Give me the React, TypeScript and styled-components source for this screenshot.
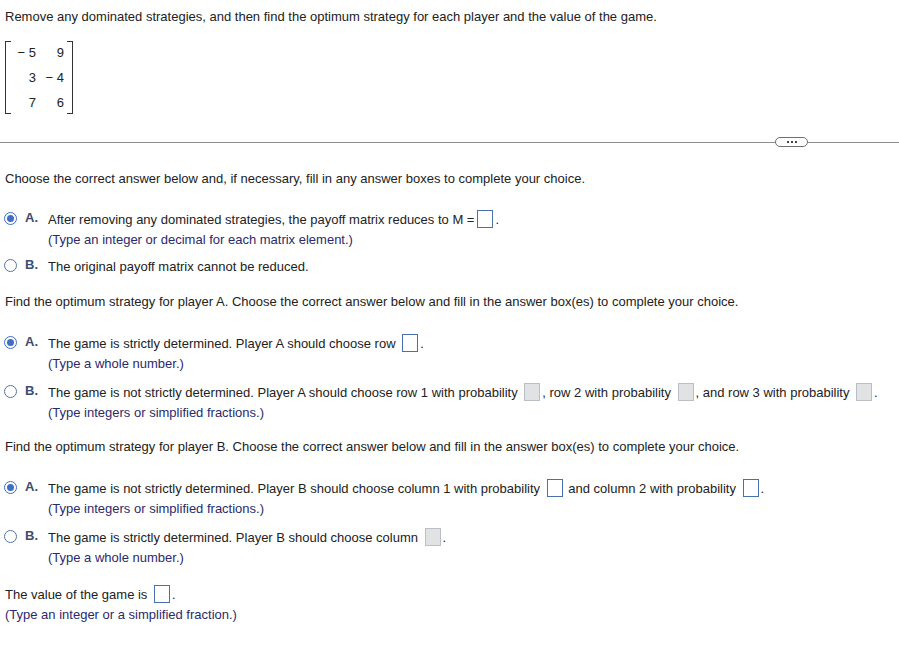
import React from "react";
import styled, { createGlobalStyle } from "styled-components";

const GlobalStyle = createGlobalStyle`
	body {
		margin: 0;
		background: #ffffff;
		font-family: "Liberation Sans", Arial, sans-serif;
		font-size: 13px;
		color: #222222;
	}
`;

const Page = styled.div`
	padding: 9px 0 0 5px;
	width: 894px;
`;

const Prompt = styled.div`
	line-height: 16px;
	white-space: nowrap;
`;

const Matrix = styled.div`
	margin: 16px 0 0 0;
	display: inline-grid;
	grid-template-columns: 28px 28px;
	grid-auto-rows: 25px;
	align-items: center;
	padding: 0 8px 0 2px;
	border-left: 1.5px solid #333;
	border-right: 1.5px solid #333;
	position: relative;
	height: 73px;
	align-content: center;

	&::before,
	&::after {
		content: "";
		position: absolute;
		top: 0;
		bottom: 0;
		width: 5px;
		border-top: 1.5px solid #333;
		border-bottom: 1.5px solid #333;
	}
	&::before {
		left: 0;
	}
	&::after {
		right: 0;
	}
`;

const Cell = styled.span`
	text-align: right;
	white-space: nowrap;
`;

const Divider = styled.div`
	margin: 23px 0 0 -5px;
	display: flex;
	align-items: center;
	height: 10px;

	&::before,
	&::after {
		content: "";
		height: 1px;
		background: #8c8c8c;
	}
	&::before {
		flex: 0 0 775px;
	}
	&::after {
		flex: 1;
	}
`;

const Pill = styled.div`
	width: 31px;
	height: 8px;
	border: 1px solid #6f6f6f;
	border-radius: 5px;
	display: flex;
	align-items: center;
	justify-content: center;
	gap: 2px;

	span {
		width: 2px;
		height: 2px;
		background: #444;
	}
`;

const Section = styled.div<{ $top: number }>`
	margin-top: ${(p) => p.$top}px;
`;

const Option = styled.div<{ $top: number }>`
	display: grid;
	grid-template-columns: 20px 23px auto;
	margin-top: ${(p) => p.$top}px;
	line-height: 20px;
`;

const Radio = styled.span<{ $on?: boolean }>`
	width: 13px;
	height: 13px;
	box-sizing: border-box;
	border-radius: 50%;
	border: 1.3px solid ${(p) => (p.$on ? "#3e6fc6" : "#5575a8")};
	margin: 2px 0 0 -1px;
	display: flex;
	align-items: center;
	justify-content: center;

	&::after {
		content: "";
		display: ${(p) => (p.$on ? "block" : "none")};
		width: 7px;
		height: 7px;
		border-radius: 50%;
		background: #3e6fc6;
	}
`;

const Letter = styled.span`
	font-weight: bold;
	color: #3b4d72;
	font-size: 13px;
	line-height: 16px;
`;

const Body = styled.div`
	white-space: nowrap;
`;

const Hint = styled.div`
	color: #2a2a6e;
	line-height: 20px;
`;

const Box = styled.span<{ $off?: boolean }>`
	display: inline-block;
	vertical-align: -4px;
	width: 14px;
	height: 16px;
	margin: 0 2px 0 3px;
	border: 1px solid ${(p) => (p.$off ? "#b9bec7" : "#4a6eb0")};
	background: ${(p) => (p.$off ? "#e1e2e4" : "#ffffff")};
`;

const Line = styled.div`
	white-space: nowrap;
	line-height: 20px;
`;

export default function App() {
	return (
		<>
			<GlobalStyle />
			<Page>
				<Prompt>
					Remove any dominated strategies, and then find the optimum strategy for each player and the value of the game.
				</Prompt>
				<Matrix>
					<Cell>− 5</Cell>
					<Cell>9</Cell>
					<Cell>3</Cell>
					<Cell>− 4</Cell>
					<Cell>7</Cell>
					<Cell>6</Cell>
				</Matrix>
				<Divider>
					<Pill>
						<span />
						<span />
						<span />
					</Pill>
				</Divider>

				<Section $top={22}>
					<Line>Choose the correct answer below and, if necessary, fill in any answer boxes to complete your choice.</Line>
				</Section>
				<Option $top={21}>
					<Radio $on />
					<Letter>A.</Letter>
					<Body>
						After removing any dominated strategies, the payoff matrix reduces to M =<Box />.
						<Hint>(Type an integer or decimal for each matrix element.)</Hint>
					</Body>
				</Option>
				<Option $top={7}>
					<Radio />
					<Letter>B.</Letter>
					<Body>The original payoff matrix cannot be reduced.</Body>
				</Option>

				<Section $top={15}>
					<Line>Find the optimum strategy for player A. Choose the correct answer below and fill in the answer box(es) to complete your choice.</Line>
				</Section>
				<Option $top={22}>
					<Radio $on />
					<Letter>A.</Letter>
					<Body>
						The game is strictly determined. Player A should choose row <Box />.
						<Hint>(Type a whole number.)</Hint>
					</Body>
				</Option>
				<Option $top={9}>
					<Radio />
					<Letter>B.</Letter>
					<Body>
						The game is not strictly determined. Player A should choose row 1 with probability <Box $off />, row 2 with
						probability <Box $off />, and row 3 with probability <Box $off />.
						<Hint>(Type integers or simplified fractions.)</Hint>
					</Body>
				</Option>

				<Section $top={14}>
					<Line>Find the optimum strategy for player B. Choose the correct answer below and fill in the answer box(es) to complete your choice.</Line>
				</Section>
				<Option $top={22}>
					<Radio $on />
					<Letter>A.</Letter>
					<Body>
						The game is not strictly determined. Player B should choose column 1 with probability <Box /> and column 2
						with probability <Box />.
						<Hint>(Type integers or simplified fractions.)</Hint>
					</Body>
				</Option>
				<Option $top={9}>
					<Radio />
					<Letter>B.</Letter>
					<Body>
						The game is strictly determined. Player B should choose column <Box $off />.
						<Hint>(Type a whole number.)</Hint>
					</Body>
				</Option>

				<Section $top={17}>
					<Line>
						The value of the game is <Box />.
					</Line>
					<Hint>(Type an integer or a simplified fraction.)</Hint>
				</Section>
			</Page>
		</>
	);
}
